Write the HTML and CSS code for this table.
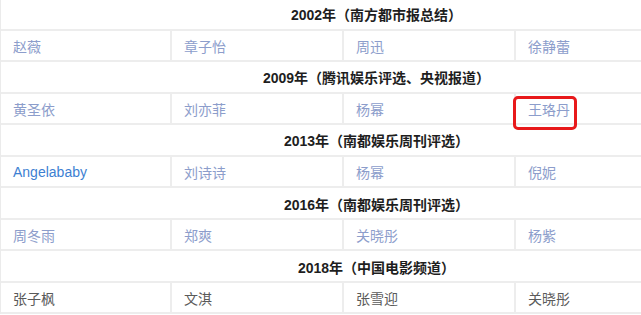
FILE: index.html
```html
<!DOCTYPE html>
<html lang="zh-CN">
<head>
<meta charset="utf-8">
<title>名单</title>
<link rel="stylesheet" href="styles.css">
</head>
<body>
<div class="table">
  <div class="cell head">2002年（南方都市报总结）</div>
  <div class="cell name">赵薇</div>
  <div class="cell name">章子怡</div>
  <div class="cell name">周迅</div>
  <div class="cell name">徐静蕾</div>

  <div class="cell head">2009年（腾讯娱乐评选、央视报道）</div>
  <div class="cell name">黄圣依</div>
  <div class="cell name">刘亦菲</div>
  <div class="cell name">杨幂</div>
  <div class="cell name marked">王珞丹<span class="highlight"></span></div>

  <div class="cell head">2013年（南都娱乐周刊评选）</div>
  <div class="cell name latin">Angelababy</div>
  <div class="cell name">刘诗诗</div>
  <div class="cell name">杨幂</div>
  <div class="cell name">倪妮</div>

  <div class="cell head">2016年（南都娱乐周刊评选）</div>
  <div class="cell name">周冬雨</div>
  <div class="cell name">郑爽</div>
  <div class="cell name">关晓彤</div>
  <div class="cell name">杨紫</div>

  <div class="cell head">2018年（中国电影频道）</div>
  <div class="cell name plain">张子枫</div>
  <div class="cell name plain">文淇</div>
  <div class="cell name plain">张雪迎</div>
  <div class="cell name plain">关晓彤</div>
</div>
</body>
</html>
```

FILE: styles.css
```css
html, body {
  margin: 0;
  padding: 0;
  background: #ffffff;
  overflow: hidden;
}

.table {
  display: grid;
  grid-template-columns: 171px 172px 172px 236px;
  grid-auto-rows: 31.55px;
  width: 751px;
  margin-top: -1px;
  border-left: 1px solid #ebebeb;
  font-family: "Liberation Sans", "Noto Sans CJK SC", sans-serif;
}

.cell {
  display: flex;
  align-items: center;
  box-sizing: border-box;
  border-bottom: 2px solid #ededed;
  padding-top: 1px;
  white-space: nowrap;
}

.head {
  grid-column: 1 / -1;
  justify-content: center;
  font-size: 14px;
  font-weight: bold;
  color: #1e1e1e;
}

.name {
  border-right: 2px solid #ededed;
  padding-left: 12px;
  font-size: 14px;
  color: #8c9dcb;
}

.latin {
  color: #3d7fd2;
}

.plain {
  color: #5a5a5a;
}

.marked {
  position: relative;
}

.highlight {
  position: absolute;
  left: -3px;
  top: 2px;
  width: 64px;
  height: 34px;
  box-sizing: border-box;
  border: 3px solid #e8191b;
  border-radius: 5px;
}
```
